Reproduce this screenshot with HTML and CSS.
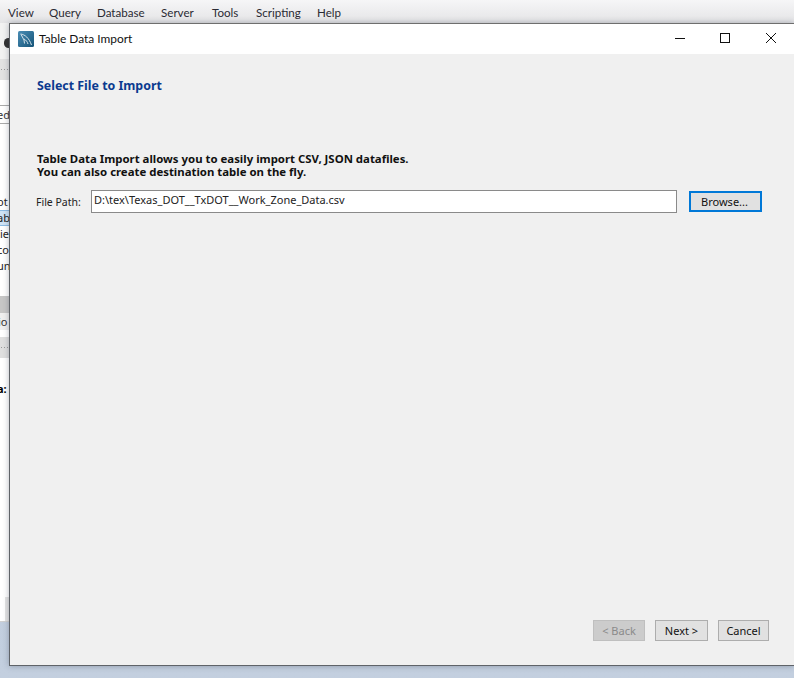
FILE: index.html
```html
<!DOCTYPE html>
<html lang="en">
<head>
<meta charset="utf-8">
<title>Table Data Import</title>
<link rel="stylesheet" href="styles.css">
</head>
<body>
<div class="desktop">
  <div class="app">
    <nav class="menubar">
      <span class="menu m-view">View</span>
      <span class="menu m-query">Query</span>
      <span class="menu m-database">Database</span>
      <span class="menu m-server">Server</span>
      <span class="menu m-tools">Tools</span>
      <span class="menu m-scripting">Scripting</span>
      <span class="menu m-help">Help</span>
    </nav>
    <div class="peek peek-tb"></div>
    <div class="peek peek-band1"></div>
    <div class="peek peek-ed">ed</div>
    <div class="peek-list">
      <div class="peek-row">ot</div>
      <div class="peek-row sel">ab</div>
      <div class="peek-row peek-ie">ie</div>
      <div class="peek-row">co</div>
      <div class="peek-row">un</div>
    </div>
    <div class="peek peek-band2"></div>
    <div class="peek peek-io">io</div>
    <div class="peek peek-band3"></div>
    <div class="peek peek-na">a:</div>
    <div class="peek peek-foot"></div>
  </div>

  <section class="dialog">
    <header class="titlebar">
      <svg class="app-icon" viewBox="0 0 16 16" aria-hidden="true">
        <defs>
          <linearGradient id="iconfill" x1="0" y1="0" x2="1" y2="1">
            <stop offset="0" stop-color="#4a8db5"/>
            <stop offset="1" stop-color="#155478"/>
          </linearGradient>
        </defs>
        <rect x="0" y="0" width="16" height="16" rx="1.5" fill="url(#iconfill)"/>
        <path d="M2.5 3 C7 3.5 11 7 13.5 14 M3 3.5 L6 9 L6.5 12.5 M6 8 C8 9 9.5 11 10 13" fill="none" stroke="#d5e2ea" stroke-width="1"/>
      </svg>
      <span class="title">Table Data Import</span>
      <div class="win-controls">
        <svg class="win-btn" viewBox="0 0 46 30" aria-hidden="true"><path d="M19 14.5H29" stroke="#111" stroke-width="1"/></svg>
        <svg class="win-btn" viewBox="0 0 46 30" aria-hidden="true"><rect x="18.5" y="9.5" width="9" height="9" fill="none" stroke="#111" stroke-width="1"/></svg>
        <svg class="win-btn" viewBox="0 0 46 30" aria-hidden="true"><path d="M18 9L28 19M28 9L18 19" stroke="#111" stroke-width="1"/></svg>
      </div>
    </header>
    <main class="content">
      <h1 class="heading">Select File to Import</h1>
      <p class="intro">Table Data Import allows you to easily import CSV, JSON datafiles.<br>You can also create destination table on the fly.</p>
      <div class="file-row">
        <label class="file-label" for="path">File Path:</label>
        <div class="file-input" id="path">D:\tex\Texas_DOT__TxDOT__Work_Zone_Data.csv</div>
        <button class="btn btn-browse" type="button">Browse...</button>
      </div>
      <div class="actions">
        <button class="btn btn-back" type="button">&lt; Back</button>
        <button class="btn btn-next" type="button">Next &gt;</button>
        <button class="btn btn-cancel" type="button">Cancel</button>
      </div>
    </main>
  </section>
</div>
</body>
</html>
```

FILE: styles.css
```css
* { box-sizing: border-box; }
html, body { margin: 0; padding: 0; }
body { width: 794px; height: 678px; overflow: hidden; font-family: "Noto Sans", "Liberation Sans", sans-serif; font-size: 11px; color: #000; }

.desktop { position: relative; width: 794px; height: 678px; overflow: hidden; background: linear-gradient(#bac7d9, #c3cfdf); }

.app { position: absolute; left: 0; top: 0; width: 794px; height: 622px; background: #fff; border-bottom: 1px solid #d0d0d0; }
.menubar { position: relative; height: 23px; background: linear-gradient(#f6f6f7, #e4e4e6); font-family: "Lato", sans-serif; font-size: 11.6px; color: #2b2b33; }
.menu { position: absolute; top: 5px; line-height: 16px; }
.m-view { left: 8px; }
.m-query { left: 49px; }
.m-database { left: 97px; }
.m-server { left: 161px; }
.m-tools { left: 212px; }
.m-scripting { left: 256px; }
.m-help { left: 317px; }

.peek { position: absolute; left: 0; width: 9px; overflow: hidden; }
.peek-tb { top: 23px; height: 36px; background: #f2f2f2; }
.peek-tb::after { content: ""; position: absolute; left: 4px; top: 15px; width: 9px; height: 10px; background: #333; border-radius: 5px; }
.peek-band1 { top: 59px; height: 21px; background: radial-gradient(circle, #999 0.6px, transparent 1px) 0 9px / 3px 3px repeat-x, #e2e2e2; }
.peek-ed { top: 105px; height: 19px; line-height: 18px; border-top: 1px solid #aaa; border-bottom: 1px solid #aaa; background: #fff; white-space: nowrap; text-indent: -3px; color: #333; }
.peek-list { position: absolute; left: 0; top: 194px; width: 9px; overflow: hidden; }
.peek-row { height: 16px; line-height: 16px; white-space: nowrap; text-indent: -3px; color: #222; }
.peek-row.sel { background: #cfe3f5; border-top: 1px solid #8dbbe3; border-bottom: 1px solid #8dbbe3; line-height: 14px; }
.peek-row.peek-ie { text-indent: 0; }
.peek-band2 { top: 296px; height: 17px; background: #c6c6c6; }
.peek-io { top: 313px; height: 17px; line-height: 17px; background: #efefef; white-space: nowrap; text-indent: -2px; color: #333; }
.peek-band3 { top: 337px; height: 21px; background: radial-gradient(circle, #999 0.6px, transparent 1px) 0 9px / 3px 3px repeat-x, #dfdfdf; }
.peek-na { top: 381px; height: 16px; line-height: 16px; font-weight: 700; white-space: nowrap; text-indent: -3px; }
.peek-foot { top: 597px; height: 24px; background: linear-gradient(90deg, #fff 5px, #e4e4e4 5px); }

.dialog { position: absolute; left: 9px; top: 23px; width: 785px; height: 643px; display: flex; flex-direction: column; border-left: 1px solid #5f6368; border-top: 1px solid #6e6e6e; border-bottom: 1px solid #5f6368; box-shadow: 0 0 6px rgba(40, 50, 70, .35); background: #f0f0f0; }

.titlebar { flex: none; height: 30px; display: flex; align-items: center; background: #fff; padding-left: 8px; }
.app-icon { width: 16px; height: 16px; flex: none; margin-top: -1px; }
.title { margin-left: 5px; font-family: "Lato", sans-serif; font-size: 11.9px; color: #111; margin-top: -1px; }
.win-controls { margin-left: auto; display: flex; }
.win-btn { width: 46px; height: 30px; display: block; }

.content { flex: 1; display: flex; flex-direction: column; padding: 0 25px 24px 27px; }
.heading { margin: 24px 0 0; font-size: 12.4px; line-height: 16px; font-weight: 700; color: #0b3a8f; }
.intro { margin: 58px 0 0; font-size: 11.4px; line-height: 13px; font-weight: 700; color: #111; }
.file-row { display: flex; align-items: center; margin-top: 12px; }
.file-label { width: 55px; flex: none; margin-left: -1px; font-size: 10.5px; color: #222; }
.file-input { width: 586px; height: 23px; flex: none; background: #fff; border: 1px solid #8a8a8a; padding: 0 2px; line-height: 18px; color: #222; }
.btn { font: inherit; color: #111; background: #e1e1e1; border: 1px solid #adadad; padding: 0; height: 21px; }
.btn-browse { width: 73px; margin-left: 12px; border: 2px solid #0078d7; padding-right: 2px; }
.actions { margin-top: auto; display: flex; justify-content: flex-end; }
.btn-back { width: 52px; color: #8a8a8a; background: #cccccc; border-color: #bfbfbf; }
.btn-next { width: 53px; margin-left: 10px; }
.btn-cancel { width: 51px; margin-left: 10px; }
```
